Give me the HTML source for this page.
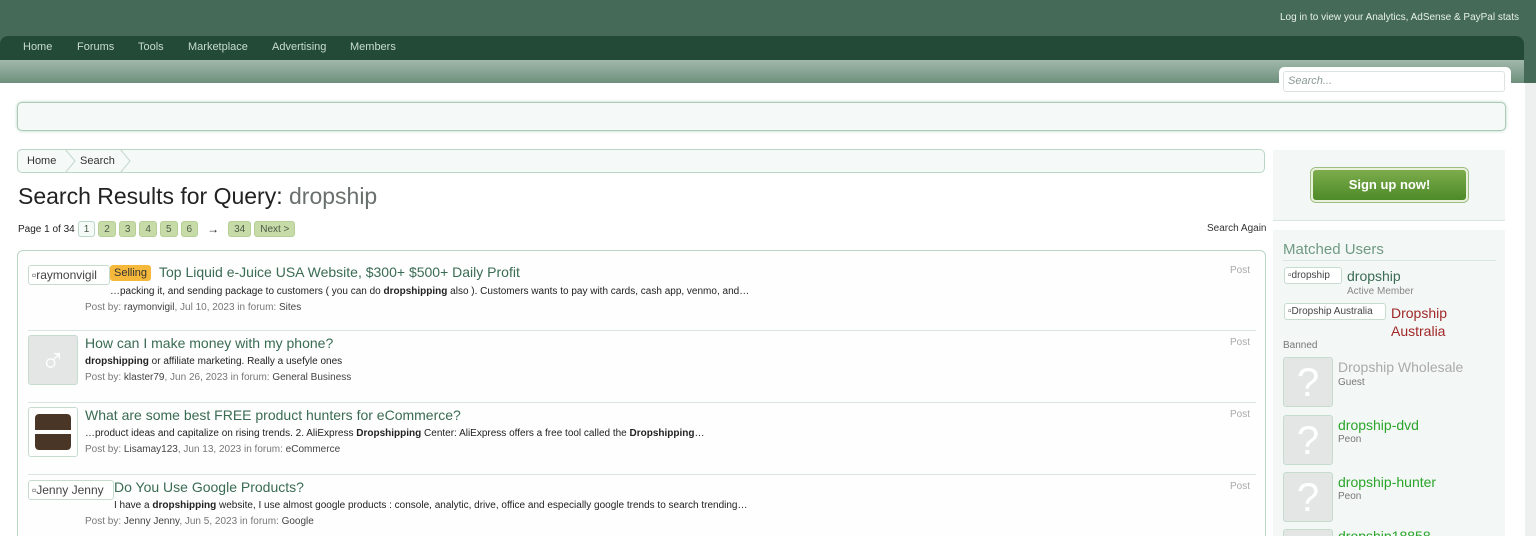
<!DOCTYPE html>
<html style="width:1536px;height:536px;overflow:hidden"><head><meta charset="utf-8"><style>
*{margin:0;padding:0;box-sizing:border-box}
body{width:1536px;height:536px;overflow:hidden;background:#fff;font-family:"Liberation Sans",sans-serif;position:relative;color:#222}
.a{position:absolute}
.hdr{left:0;top:0;width:1536px;height:83px;background:#456b58}
.nav{left:0;top:36px;width:1524px;height:24px;background:#234a37;border-radius:8px 8px 0 0}
.nav span{position:absolute;top:5px;color:#c8dccf;font-size:11px}
.band{left:0;top:60px;width:1524px;height:23px;background:linear-gradient(#a1b8aa,#6e907d)}
.gray{left:1525px;top:83px;width:11px;height:453px;background:#eef0ef}
.sb{left:1279px;top:67px;width:232px;height:30px;background:#fff;border-radius:5px 5px 0 0}
.sb div{position:absolute;left:4px;top:4px;width:222px;height:21px;border:1px solid #dde3e0;border-radius:3px;font-size:11px;color:#8a9a92;font-style:italic;padding:3px 4px}
.panel{left:17px;top:102px;width:1489px;height:29px;background:#f5f9f8;border:1px solid #a9cbb8;border-radius:5px;box-shadow:0 0 3px #b9d4c4}
.bc{left:17px;top:149px;width:1248px;height:24px;background:#f5f9f8;border:1px solid #b9d6c6;border-radius:5px;font-size:11px;color:#333}
h1{position:absolute;left:18px;top:183px;font-size:23px;font-weight:normal;color:#222}
h1 span{color:#6a716d}
.pg{left:18px;top:221px;font-size:10px;color:#222;display:flex;align-items:center;gap:3px}
.pg b{font-weight:normal;display:inline-block;height:16px;line-height:15px;padding:0 5px;background:#c7dba8;border:1px solid #b5cf96;border-radius:3px;color:#4b5b47;font-size:10px}
.list{left:17px;top:250px;width:1249px;height:300px;border:1px solid #b9d6c6;border-radius:6px;background:#fdfefd}
.it{position:absolute;left:10px;width:1228px;border-bottom:1px solid #d8e6df}
.t{font-size:14px;color:#3a6b54}
.s{font-size:10px;color:#222}
.m{font-size:10px;color:#777}
.m i{font-style:normal;color:#444}
.post{position:absolute;right:6px;top:14px;font-size:10px;color:#aaa}
.av{position:absolute;border:1px solid #c6dccf;border-radius:3px;background:#fff;font-size:12px;color:#444;padding:2px 3px}
.side{left:1273px;top:150px;width:232px;height:386px;background:#f3f7f6}
.btn{left:1311px;top:168px;width:157px;height:34px;border:2px solid #e9f1dc;box-shadow:0 0 0 1px #9bbd82;border-radius:5px;background:linear-gradient(#7cac4c,#4e8a28);color:#fff;font-weight:bold;font-size:13px;text-align:center;line-height:30px}
.q{position:absolute;width:50px;height:50px;background:#e4e6e5;border:1px solid #c6dccf;border-radius:3px;color:#fff;font-size:40px;text-align:center;line-height:50px}
</style></head><body>
<div class="a hdr"></div>
<div class="a" style="right:17px;top:12px;font-size:10px;color:#e6efe9">Log in to view your Analytics, AdSense &amp; PayPal stats</div>
<div class="a nav"><span style="left:23px">Home</span><span style="left:77px">Forums</span><span style="left:138px">Tools</span><span style="left:188px">Marketplace</span><span style="left:272px">Advertising</span><span style="left:350px">Members</span></div>
<div class="a band"></div>
<div class="a gray"></div>
<div class="a sb"><div>Search...</div></div>
<div class="a panel"></div>
<div class="a bc"><span class="a" style="left:9px;top:5px">Home</span><span class="a" style="left:62px;top:5px">Search</span>
<svg class="a" style="left:44px;top:-1px" width="90" height="24"><path d="M3 0L13 12L3 24M58 0L68 12L58 24" fill="none" stroke="#c3d8cc"/></svg></div>
<h1>Search Results for Query: <span>dropship</span></h1>
<div class="a pg">Page 1 of 34 <b style="background:#f5f9f8;border-color:#b9d6c6">1</b><b>2</b><b>3</b><b>4</b><b>5</b><b>6</b><span style="margin:0 6px;font-size:12px">→</span><b>34</b><b>Next &gt;</b></div>
<div class="a" style="left:1207px;top:223px;font-size:10px;color:#333">Search Again</div>
<div class="a list">
 <div class="it" style="top:0;height:80px">
  <div class="av" style="left:0;top:14px;width:82px">▫raymonvigil</div>
  <span class="a" style="left:82px;top:14px;background:#f5b83a;border-radius:3px;font-size:11px;padding:2px 4px;color:#333">Selling</span>
  <div class="a t" style="left:131px;top:13px">Top Liquid e-Juice USA Website, $300+ $500+ Daily Profit</div>
  <div class="a s" style="left:82px;top:35px">…packing it, and sending package to customers ( you can do <b>dropshipping</b> also ). Customers wants to pay with cards, cash app, venmo, and…</div>
  <div class="a m" style="left:57px;top:51px">Post by: <i>raymonvigil</i>, Jul 10, 2023 in forum: <i>Sites</i></div>
  <div class="post">Post</div>
 </div>
 <div class="it" style="top:80px;height:72px">
  <div class="q" style="left:0;top:4px;background:#e4e6e5;font-size:34px">♂</div>
  <div class="a t" style="left:57px;top:4px">How can I make money with my phone?</div>
  <div class="a s" style="left:57px;top:25px"><b>dropshipping</b> or affiliate marketing. Really a usefyle ones</div>
  <div class="a m" style="left:57px;top:41px">Post by: <i>klaster79</i>, Jun 26, 2023 in forum: <i>General Business</i></div>
  <div class="post" style="top:6px">Post</div>
 </div>
 <div class="it" style="top:152px;height:72px">
  <div class="q" style="left:0;top:4px;background:#fff"><div style="margin:6px 6px;width:36px;height:36px;background:linear-gradient(#4a3626 0 45%,#fff 45% 55%,#4a3626 55%);border-radius:4px"></div></div>
  <div class="a t" style="left:57px;top:4px">What are some best FREE product hunters for eCommerce?</div>
  <div class="a s" style="left:57px;top:25px">…product ideas and capitalize on rising trends. 2. AliExpress <b>Dropshipping</b> Center: AliExpress offers a free tool called the <b>Dropshipping</b>…</div>
  <div class="a m" style="left:57px;top:41px">Post by: <i>Lisamay123</i>, Jun 13, 2023 in forum: <i>eCommerce</i></div>
  <div class="post" style="top:6px">Post</div>
 </div>
 <div class="it" style="top:224px;height:80px;border:0">
  <div class="av" style="left:0;top:5px;width:86px">▫Jenny Jenny</div>
  <div class="a t" style="left:86px;top:4px">Do You Use Google Products?</div>
  <div class="a s" style="left:86px;top:25px">I have a <b>dropshipping</b> website, I use almost google products : console, analytic, drive, office and especially google trends to search trending…</div>
  <div class="a m" style="left:57px;top:41px">Post by: <i>Jenny Jenny</i>, Jun 5, 2023 in forum: <i>Google</i></div>
  <div class="post" style="top:6px">Post</div>
 </div>
</div>
<div class="a side"></div>
<div class="a" style="left:1273px;top:220px;width:232px;height:10px;background:#fff;border-top:1px solid #d8e6df"></div>
<div class="a btn">Sign up now!</div>
<div class="a" style="left:1283px;top:241px;font-size:15px;color:#6f9a83">Matched Users</div>
<div class="a" style="left:1283px;top:260px;width:213px;border-top:1px solid #d8e6df"></div>
<div class="av" style="left:1284px;top:267px;font-size:10px;width:58px">▫dropship</div>
<div class="a" style="left:1347px;top:268px;font-size:14px;color:#3a6b54">dropship</div>
<div class="a" style="left:1347px;top:286px;font-size:10px;color:#888">Active Member</div>
<div class="av" style="left:1284px;top:303px;font-size:10px;width:102px">▫Dropship Australia</div>
<div class="a" style="left:1391px;top:304px;font-size:14px;color:#a02828;line-height:18px">Dropship<br>Australia</div>
<div class="a" style="left:1283px;top:340px;font-size:10px;color:#777">Banned</div>
<div class="q" style="left:1283px;top:357px">?</div>
<div class="a" style="left:1338px;top:359px;font-size:14px;color:#aaa">Dropship Wholesale</div>
<div class="a" style="left:1338px;top:377px;font-size:10px;color:#777">Guest</div>
<div class="q" style="left:1283px;top:415px">?</div>
<div class="a" style="left:1338px;top:417px;font-size:14px;color:#2aa52a">dropship-dvd</div>
<div class="a" style="left:1338px;top:434px;font-size:10px;color:#777">Peon</div>
<div class="q" style="left:1283px;top:472px">?</div>
<div class="a" style="left:1338px;top:474px;font-size:14px;color:#2aa52a">dropship-hunter</div>
<div class="a" style="left:1338px;top:491px;font-size:10px;color:#777">Peon</div>
<div class="q" style="left:1283px;top:529px">?</div>
<div class="a" style="left:1338px;top:528px;font-size:14px;color:#2aa52a">dropship18858</div>
</body></html>
